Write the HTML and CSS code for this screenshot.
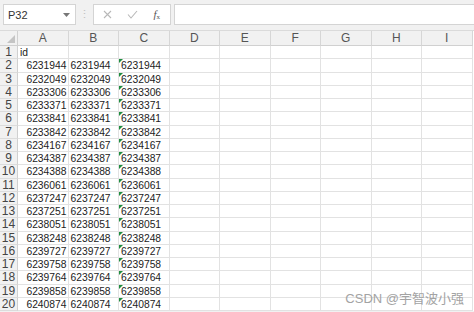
FILE: index.html
```html
<!DOCTYPE html>
<html lang="en">
<head>
  <meta charset="UTF-8">
  <title>Sheet</title>
  <link rel="stylesheet" href="styles.css">
</head>
<body>
  <div class="toolbar">
    <div class="namebox">
      <span>P32</span>
      <svg class="caret" width="7" height="4" viewBox="0 0 7 4"><path d="M0 0h7L3.5 4z" fill="#777"/></svg>
    </div>
    <div class="grip">&#8942;</div>
    <div class="fxbox">
      <svg width="9" height="9" viewBox="0 0 9 9"><path d="M1 1l7 7M8 1l-7 7" stroke="#b8b8b8" stroke-width="1.1"/></svg>
      <svg width="11" height="9" viewBox="0 0 11 9"><path d="M1 4.5l3 3.5 6-7" stroke="#b8b8b8" stroke-width="1.1" fill="none"/></svg>
      <span class="fx"><i>f</i><sub>x</sub></span>
    </div>
    <div class="formula"></div>
  </div>

  <div class="sheet">
    <div class="corner"><svg width="8" height="8" viewBox="0 0 8 8"><path d="M8 0v8H0z" fill="#c4c4c4"/></svg></div>
    <div class="ch">A</div><div class="ch">B</div><div class="ch">C</div><div class="ch">D</div><div class="ch">E</div><div class="ch">F</div><div class="ch">G</div><div class="ch">H</div><div class="ch">I</div>

    <div class="rh">1</div><div class="c lt">id</div><div class="c"></div><div class="c"></div><div class="c"></div><div class="c"></div><div class="c"></div><div class="c"></div><div class="c"></div><div class="c"></div>
    <div class="rh">2</div><div class="c rt">6231944</div><div class="c lt">6231944</div><div class="c tx">6231944</div><div class="c"></div><div class="c"></div><div class="c"></div><div class="c"></div><div class="c"></div><div class="c"></div>
    <div class="rh">3</div><div class="c rt">6232049</div><div class="c lt">6232049</div><div class="c tx">6232049</div><div class="c"></div><div class="c"></div><div class="c"></div><div class="c"></div><div class="c"></div><div class="c"></div>
    <div class="rh">4</div><div class="c rt">6233306</div><div class="c lt">6233306</div><div class="c tx">6233306</div><div class="c"></div><div class="c"></div><div class="c"></div><div class="c"></div><div class="c"></div><div class="c"></div>
    <div class="rh">5</div><div class="c rt">6233371</div><div class="c lt">6233371</div><div class="c tx">6233371</div><div class="c"></div><div class="c"></div><div class="c"></div><div class="c"></div><div class="c"></div><div class="c"></div>
    <div class="rh">6</div><div class="c rt">6233841</div><div class="c lt">6233841</div><div class="c tx">6233841</div><div class="c"></div><div class="c"></div><div class="c"></div><div class="c"></div><div class="c"></div><div class="c"></div>
    <div class="rh">7</div><div class="c rt">6233842</div><div class="c lt">6233842</div><div class="c tx">6233842</div><div class="c"></div><div class="c"></div><div class="c"></div><div class="c"></div><div class="c"></div><div class="c"></div>
    <div class="rh">8</div><div class="c rt">6234167</div><div class="c lt">6234167</div><div class="c tx">6234167</div><div class="c"></div><div class="c"></div><div class="c"></div><div class="c"></div><div class="c"></div><div class="c"></div>
    <div class="rh">9</div><div class="c rt">6234387</div><div class="c lt">6234387</div><div class="c tx">6234387</div><div class="c"></div><div class="c"></div><div class="c"></div><div class="c"></div><div class="c"></div><div class="c"></div>
    <div class="rh">10</div><div class="c rt">6234388</div><div class="c lt">6234388</div><div class="c tx">6234388</div><div class="c"></div><div class="c"></div><div class="c"></div><div class="c"></div><div class="c"></div><div class="c"></div>
    <div class="rh">11</div><div class="c rt">6236061</div><div class="c lt">6236061</div><div class="c tx">6236061</div><div class="c"></div><div class="c"></div><div class="c"></div><div class="c"></div><div class="c"></div><div class="c"></div>
    <div class="rh">12</div><div class="c rt">6237247</div><div class="c lt">6237247</div><div class="c tx">6237247</div><div class="c"></div><div class="c"></div><div class="c"></div><div class="c"></div><div class="c"></div><div class="c"></div>
    <div class="rh">13</div><div class="c rt">6237251</div><div class="c lt">6237251</div><div class="c tx">6237251</div><div class="c"></div><div class="c"></div><div class="c"></div><div class="c"></div><div class="c"></div><div class="c"></div>
    <div class="rh">14</div><div class="c rt">6238051</div><div class="c lt">6238051</div><div class="c tx">6238051</div><div class="c"></div><div class="c"></div><div class="c"></div><div class="c"></div><div class="c"></div><div class="c"></div>
    <div class="rh">15</div><div class="c rt">6238248</div><div class="c lt">6238248</div><div class="c tx">6238248</div><div class="c"></div><div class="c"></div><div class="c"></div><div class="c"></div><div class="c"></div><div class="c"></div>
    <div class="rh">16</div><div class="c rt">6239727</div><div class="c lt">6239727</div><div class="c tx">6239727</div><div class="c"></div><div class="c"></div><div class="c"></div><div class="c"></div><div class="c"></div><div class="c"></div>
    <div class="rh">17</div><div class="c rt">6239758</div><div class="c lt">6239758</div><div class="c tx">6239758</div><div class="c"></div><div class="c"></div><div class="c"></div><div class="c"></div><div class="c"></div><div class="c"></div>
    <div class="rh">18</div><div class="c rt">6239764</div><div class="c lt">6239764</div><div class="c tx">6239764</div><div class="c"></div><div class="c"></div><div class="c"></div><div class="c"></div><div class="c"></div><div class="c"></div>
    <div class="rh">19</div><div class="c rt">6239858</div><div class="c lt">6239858</div><div class="c tx">6239858</div><div class="c"></div><div class="c"></div><div class="c"></div><div class="c"></div><div class="c"></div><div class="c"></div>
    <div class="rh">20</div><div class="c rt">6240874</div><div class="c lt">6240874</div><div class="c tx">6240874</div><div class="c"></div><div class="c"></div><div class="c"></div><div class="c"></div><div class="c"></div><div class="c"></div>
  </div>

  <div class="watermark">CSDN @宇智波小强</div>
</body>
</html>
```

FILE: styles.css
```css
body {
  margin: 0;
  padding: 0;
  font-family: "Liberation Sans", Arial, sans-serif;
  background-color: #f1f1f1;
  overflow: hidden;
  position: relative;
  height: 312px;
}

.toolbar {
  display: flex;
  align-items: center;
  height: 31px;
  box-sizing: border-box;
  padding: 0 0 1px 3px;
  border-bottom: 1px solid #dadada;
}

.namebox {
  display: flex;
  align-items: center;
  justify-content: space-between;
  width: 73px;
  height: 21px;
  box-sizing: border-box;
  padding: 0 5px 0 4px;
  background: #fff;
  border: 1px solid #d4d4d4;
  font-size: 11px;
  color: #333;
}

.grip {
  width: 17px;
  text-align: center;
  font-size: 11px;
  color: #c0c0c0;
}

.fxbox {
  display: flex;
  align-items: center;
  justify-content: space-between;
  width: 78px;
  height: 21px;
  box-sizing: border-box;
  padding: 0 10px 0 9px;
  background: #fff;
  border: 1px solid #d4d4d4;
}

.fx {
  font-family: "Liberation Serif", serif;
  font-size: 11px;
  color: #555;
}

.fx sub {
  font-size: 7px;
  vertical-align: -1px;
}

.formula {
  flex: 1;
  height: 21px;
  margin-left: 3px;
  box-sizing: border-box;
  background: #fff;
  border: 1px solid #d4d4d4;
  border-right: none;
}

.sheet {
  display: grid;
  grid-template-columns: 18px repeat(9, 50.5px);
  grid-template-rows: 15px repeat(20, 13.25px);
  background: #fff;
}

.sheet > div {
  box-sizing: border-box;
  overflow: hidden;
  white-space: nowrap;
}

.corner {
  display: flex;
  align-items: flex-end;
  justify-content: flex-end;
  padding: 0 2px 2px 0;
  background: #f1f1f1;
  border-right: 1px solid #d0d0d0;
  border-bottom: 1px solid #d0d0d0;
}

.ch {
  background: #f1f1f1;
  border-right: 1px solid #d6d6d6;
  border-bottom: 1px solid #d0d0d0;
  text-align: center;
  font-size: 12px;
  line-height: 15px;
  color: #555;
}

.rh {
  background: #f1f1f1;
  border-right: 1px solid #d0d0d0;
  border-bottom: 1px solid #dcdcdc;
  text-align: center;
  font-size: 12px;
  line-height: 13px;
  color: #444;
}

.c {
  position: relative;
  border-right: 1px solid #e2e2e2;
  border-bottom: 1px solid #e2e2e2;
  font-size: 10.3px;
  line-height: 13px;
  color: #222;
}

.rt {
  text-align: right;
  padding-right: 1px;
}

.lt {
  padding-left: 2px;
}

.tx {
  padding-left: 2px;
}

.tx::before {
  content: "";
  position: absolute;
  left: 0;
  top: 0;
  border-top: 4px solid #1e8c3e;
  border-right: 4px solid transparent;
}

.watermark {
  position: absolute;
  right: 10px;
  bottom: 5px;
  font-family: "Liberation Sans", "Noto Sans CJK SC", sans-serif;
  font-size: 13px;
  color: #a3a3a3;
}
```
